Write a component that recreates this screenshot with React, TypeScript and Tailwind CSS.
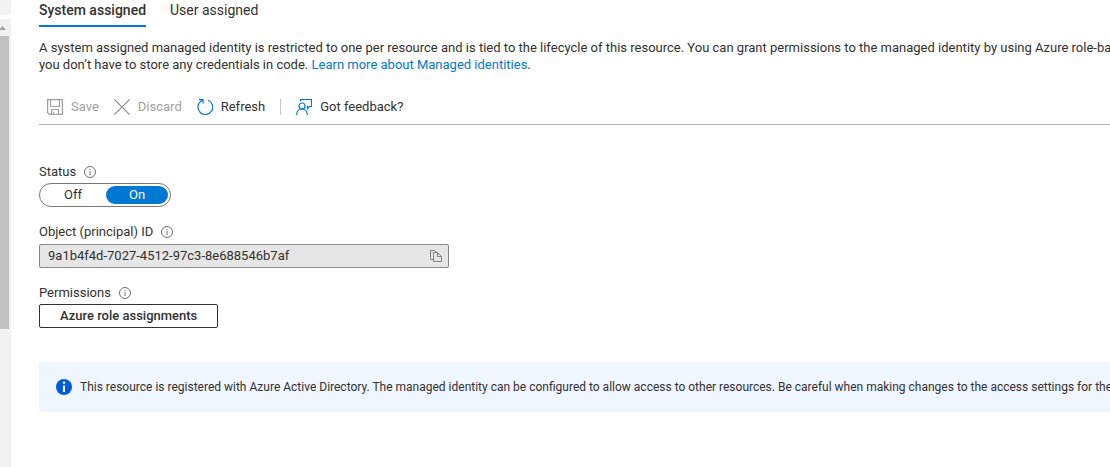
import { useState } from 'react'
import type { ReactNode } from 'react'

const tabs = ['System assigned', 'User assigned']

function SaveIcon() {
    return (
        <svg className="w-4 h-4" viewBox="0 0 16 16" fill="none" stroke="#a19f9d" strokeWidth="1.2" aria-hidden="true">
            <path d="M.6.6h14.800v14.800H2.600l-2-2z" />
            <path d="M3.500.5v7h9v-7" />
            <path d="M4.500 15.500v-5h7v5" />
            <path d="M6.500 12.500v3" />
        </svg>
    )
}

function DiscardIcon() {
    return (
        <svg className="w-4 h-4" viewBox="0 0 16 16" fill="none" stroke="#8a8886" strokeWidth="1.1" aria-hidden="true">
            <path d="M.4.4l15.200 15.200M15.600.4L.4 15.600" />
        </svg>
    )
}

function RefreshIcon() {
    return (
        <svg className="w-4 h-4" viewBox="0 0 16 16" fill="none" stroke="#0078d4" strokeWidth="1.2" aria-hidden="true">
            <path d="M11 1.200A7.400 7.400 0 1 1 3.600 2.400L6 .8" />
            <path d="M2 .6h4v4" />
        </svg>
    )
}

function FeedbackIcon() {
    return (
        <svg className="w-4 h-4" viewBox="0 0 16 16" fill="none" stroke="#0078d4" strokeWidth="1.2" aria-hidden="true">
            <path d="M4.500 2.500v-2h11v7h-2l-2 2v-2h-1" />
            <circle cx="6" cy="7" r="3" />
            <path d="M.6 16c.2-3.600 2.400-6 5.400-6s5.200 2.400 5.400 6" />
        </svg>
    )
}

function CopyIcon() {
    return (
        <svg className="w-3 h-3" viewBox="0 0 12 12" fill="none" stroke="#797775" strokeWidth="0.9" aria-hidden="true">
            <path d="M3.500 9.500h-3v-9h4l2 2" />
            <path d="M3.500 2.500h4l4 4v5h-8z" />
            <path d="M7.500 2.500v4h4" />
        </svg>
    )
}

function InfoButton({ label }: { label: string }) {
    return (
        <button type="button" aria-label={label}>
            <svg className="w-3 h-3" viewBox="0 0 12 12" fill="none" stroke="#605e5c" strokeWidth="0.9" aria-hidden="true">
                <circle cx="6" cy="6" r="5.500" />
                <path d="M6 5v4M6 3v1" />
            </svg>
        </button>
    )
}

function ToolbarButton({ icon, children, disabled }: { icon: ReactNode; children: ReactNode; disabled?: boolean }) {
    return (
        <button type="button" disabled={disabled} className="flex items-center gap-2 disabled:text-[#a19f9d]">
            {icon}
            {children}
        </button>
    )
}

export default function App() {
    const [tab, setTab] = useState(tabs[0])
    const [status, setStatus] = useState('On')

    return (
        <div className="flex min-h-screen overflow-hidden bg-white text-[13px] leading-[18px] text-[#323130] font-[Roboto,'Open_Sans',sans-serif]">

            {/* Scrollbar of the menu pane */}
            <div className="flex w-[11px] shrink-0 flex-col gap-1" aria-hidden="true">
                <div className="h-[15px] bg-[#f3f2f1]" />
                <div className="flex flex-1 flex-col bg-[#f1f1f1]">
                    <svg className="h-[17px] w-[9px]" viewBox="0 0 9 17" fill="#a3a3a3">
                        <path d="M-1 11l3.500-4L6 11z" />
                    </svg>
                    <div className="flex flex-1 flex-col">
                        <div className="w-[9px] grow-[68] bg-[#c1c1c1]" />
                        <div className="grow-[32]" />
                    </div>
                </div>
            </div>

            <main className="min-w-0 flex-1 overflow-hidden pl-7">

                {/* Tabs */}
                <div role="tablist" className="flex gap-6 text-sm leading-5">
                    {tabs.map(t => (
                        <button
                            key={t}
                            type="button"
                            role="tab"
                            aria-selected={t === tab}
                            onClick={() => setTab(t)}
                            className={t === tab ? 'border-b-2 border-[#0078d4] pb-[5px] font-medium' : 'border-b-2 border-transparent pb-[5px]'}
                        >
                            {t}
                        </button>
                    ))}
                </div>

                <p className="mt-3 leading-[17px] whitespace-nowrap">
                    A system assigned managed identity is restricted to one per resource and is tied to the lifecycle of this resource. You can grant permissions to the managed identity by using Azure role-bas
                    <br />
                    you don’t have to store any credentials in code.{' '}
                    <a href="#managed-identities" className="text-[#0078d4]">Learn more about Managed identities</a>.
                </p>

                {/* Toolbar */}
                <div className="mt-4 flex h-9 items-center gap-[15px] border-b border-[#b3b0ad] pl-2">
                    <ToolbarButton icon={<SaveIcon />} disabled>Save</ToolbarButton>
                    <ToolbarButton icon={<DiscardIcon />} disabled>Discard</ToolbarButton>
                    <ToolbarButton icon={<RefreshIcon />}>Refresh</ToolbarButton>
                    <div className="h-4 w-px bg-[#c8c6c4]" />
                    <ToolbarButton icon={<FeedbackIcon />}>Got feedback?</ToolbarButton>
                </div>

                {/* Status */}
                <fieldset className="mt-[38px]">
                    <legend className="mb-0.5 flex items-center gap-2">
                        Status
                        <InfoButton label="About status" />
                    </legend>
                    <div className="flex h-6 w-[132px] gap-0.5 rounded-full border border-[#797775] p-0.5">
                        {['Off', 'On'].map(s => (
                            <label key={s} className="flex flex-1 items-center justify-center rounded-full has-checked:bg-[#0078d4] has-checked:text-white">
                                <input
                                    type="radio"
                                    name="status"
                                    value={s}
                                    checked={status === s}
                                    onChange={() => setStatus(s)}
                                    className="sr-only"
                                />
                                {s}
                            </label>
                        ))}
                    </div>
                </fieldset>

                {/* Object ID */}
                <div className="mt-4">
                    <div className="mb-[3px] flex items-center gap-2">
                        <label htmlFor="object-id">Object (principal) ID</label>
                        <InfoButton label="About object ID" />
                    </div>
                    <div className="flex h-6 max-w-[410px] items-center rounded-xs border border-[#8a8886] bg-[#e6e6e6] pr-1.5 pl-2">
                        <input
                            id="object-id"
                            readOnly
                            value="9a1b4f4d-7027-4512-97c3-8e688546b7af"
                            className="min-w-0 flex-1 bg-transparent outline-none"
                        />
                        <button type="button" aria-label="Copy to clipboard">
                            <CopyIcon />
                        </button>
                    </div>
                </div>

                {/* Permissions */}
                <div className="mt-4">
                    <div className="mb-0.5 flex items-center gap-2">
                        Permissions
                        <InfoButton label="About permissions" />
                    </div>
                    <button type="button" className="flex h-6 items-center rounded-xs border border-[#323130] px-5 font-medium">
                        Azure role assignments
                    </button>
                </div>

                <div className="mt-[34px] flex h-[50px] items-center gap-2 rounded-l-xs bg-[#f0f6ff] pl-[17px] text-xs whitespace-nowrap">
                    <svg className="h-4 w-4 shrink-0" viewBox="0 0 16 16" aria-hidden="true">
                        <circle cx="8" cy="8" r="8" fill="#015cda" />
                        <circle cx="8" cy="3.800" r="1.200" fill="#fff" />
                        <path d="M7 6.500h2v6.500H7z" fill="#fff" />
                    </svg>
                    <p>
                        This resource is registered with Azure Active Directory. The managed identity can be configured to allow access to other resources. Be careful when making changes to the access settings for the m
                    </p>
                </div>
            </main>
        </div>
    )
}
